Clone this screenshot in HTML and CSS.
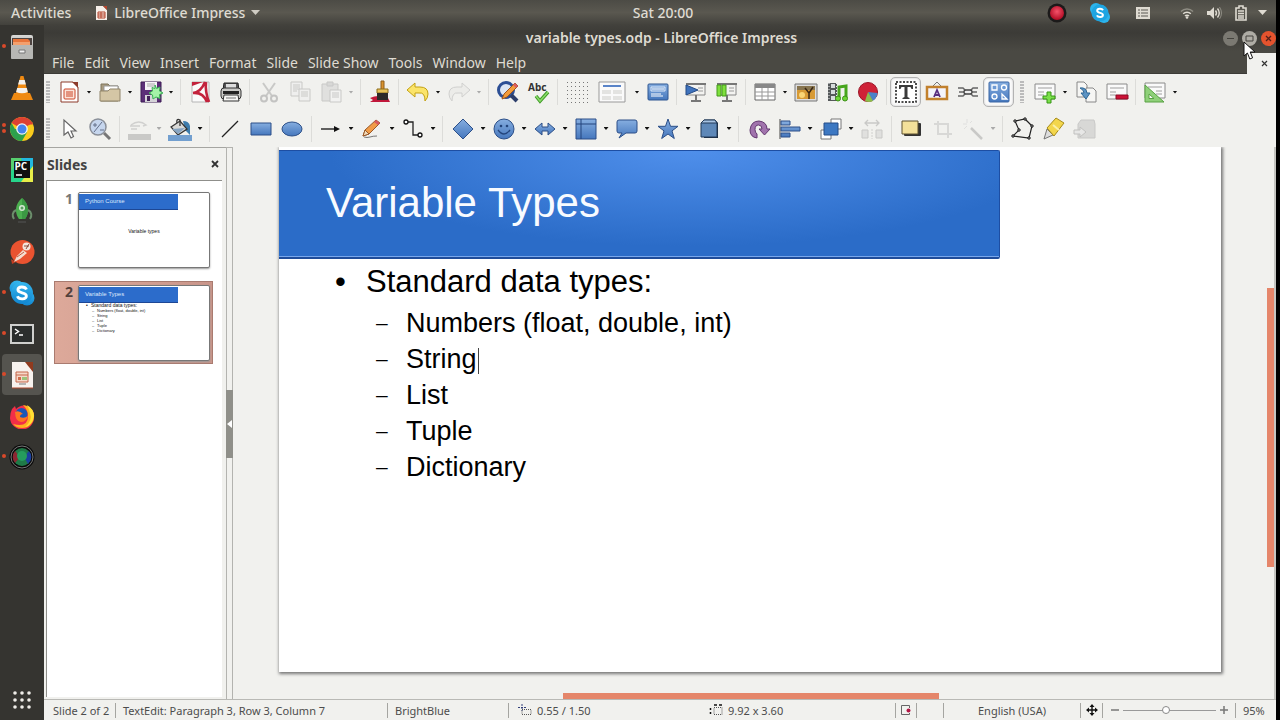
FILE: index.html
```
<!DOCTYPE html>
<html lang="en">
<head>
    <meta charset="UTF-8">
    <meta name="viewport" content="width=device-width, initial-scale=1.0">
    <title>variable types.odp - LibreOffice Impress</title>
    <link rel="stylesheet" href="styles.css">
</head>
<body>
    <svg class="defs" width="0" height="0" aria-hidden="true">
        <defs>
            <linearGradient id="blue" x1="0" y1="0" x2="0" y2="1"><stop offset="0" stop-color="#86aee0"/><stop offset="1" stop-color="#4577bd"/></linearGradient>
            <linearGradient id="metal" x1="0" y1="0" x2="0" y2="1"><stop offset="0" stop-color="#d8d8d6"/><stop offset="1" stop-color="#8e8e8c"/></linearGradient>
            <linearGradient id="sky" x1="0" y1="0" x2="0" y2="1"><stop offset="0" stop-color="#35b7ee"/><stop offset="1" stop-color="#1286d0"/></linearGradient>
            <radialGradient id="red" cx="0.5" cy="0.4" r="0.6"><stop offset="0" stop-color="#f4526a"/><stop offset="1" stop-color="#b00a22"/></radialGradient>
        </defs>
    </svg>
    <div class="screen">
        <header class="topbar">
            <div class="topLeft">
                <button class="topBtn">Activities</button>
                <button class="topBtn appMenu">
                    <svg width="13" height="14" viewBox="0 0 13 14"><path d="M1 0h7l4 4v10H1z" fill="#f6efe9"/><path d="M8 0h4v4z" fill="#b5452c"/><path d="M3 6h7v6H3zM3 8h7M6 6v6M3 10h7" fill="none" stroke="#b5452c"/></svg>
                    LibreOffice Impress
                    <svg width="9" height="5" viewBox="0 0 9 5"><path d="M0 0h9L4.500 5z" fill="#cfccc3"/></svg>
                </button>
            </div>
            <button class="topBtn clock">Sat 20:00</button>
            <div class="tray">
                <svg width="20" height="20" viewBox="0 0 20 20"><circle cx="10" cy="10" r="9.500" fill="#1c1a1a"/><circle cx="10" cy="10" r="7" fill="url(#red)"/></svg>
                <svg class="traySkype" width="20" height="20" viewBox="0 0 20 20"><circle cx="6" cy="6" r="6" fill="#2cb4ec"/><circle cx="14" cy="14" r="6" fill="#2cb4ec"/><circle cx="10" cy="10" r="8.500" fill="#1ea5e2"/><path d="M13 7.300C12 5.300 7.200 5.200 7.200 7.800s5.700 1.500 5.700 4.200-5 2.700-6 .3" fill="none" stroke="#fff" stroke-width="2"/></svg>
                <svg class="trayList" width="14" height="12" viewBox="0 0 14 12"><rect width="14" height="12" fill="#dfdbd2"/><path d="M2 3h2M5 3h7M2 6h2M5 6h7M2 9h2M5 9h7" stroke="#5b5952"/></svg>
                <svg class="trayWifi" width="14" height="12" viewBox="0 0 14 12"><path d="M1 4.500a8.500 8.500 0 0 1 12 0" fill="none" stroke="#8f8d84" stroke-width="1.500"/><path d="M3.200 6.800a5.400 5.400 0 0 1 7.600 0M5 9a2.800 2.800 0 0 1 4 0" fill="none" stroke="#dfdbd2" stroke-width="1.500"/><circle cx="7" cy="10.500" r="1.300" fill="#dfdbd2"/></svg>
                <svg class="traySound" width="16" height="14" viewBox="0 0 16 14"><path d="M1 5h3l4-4v12L4 9H1z" fill="#dfdbd2"/><path d="M9.500 4.500q2 2.500 0 5M11.500 2.500q3.500 4.500 0 9" fill="none" stroke="#dfdbd2" stroke-width="1.400"/><path d="M13.500 1q4 6 0 12" fill="none" stroke="#8f8d84"/></svg>
                <svg class="trayBattery" width="12" height="16" viewBox="0 0 12 16"><path d="M4 1h4v2h3v12H1V3h3z" fill="none" stroke="#dfdbd2" stroke-width="1.600"/><path d="M3 6h6M3 8.500h6M3 11h6M3 13h6" stroke="#dfdbd2" stroke-width="1.400"/></svg>
                <svg width="9" height="5" viewBox="0 0 9 5"><path d="M0 0h9L4.500 5z" fill="#dfdbd2"/></svg>
            </div>
        </header>

        <nav class="dock">
            <button class="dockItem running" aria-label="Files"><svg width="26" height="26" viewBox="0 0 26 26"><rect x="2" y="1" width="22" height="24" rx="2" fill="url(#metal)"/><rect x="3" y="4" width="20" height="7" fill="#4d4340"/><path d="M4 5h15l2 2v4H4z" fill="#e8743a"/><path d="M4 8h17v3H4z" fill="#f3a06e"/><rect x="2" y="11" width="22" height="14" rx="1" fill="#b7b7b4"/><path d="M10 16h6v3h-6z" fill="#eee" stroke="#777"/></svg></button>
            <button class="dockItem" aria-label="VLC"><svg width="26" height="26" viewBox="0 0 26 26"><path d="M5 18h16l3 7H2z" fill="#f08a12"/><path d="M11.500 1h3l5 19q-6.500 3-13 0z" fill="#f08a12"/><path d="M10.300 5h5.400l1.200 4.500H9.100zM8.200 13h9.600l1 4q-5.800 2.500-11.700 0z" fill="#f4f1ed"/></svg></button>
            <button class="dockItem running two" aria-label="Chrome"><svg width="26" height="26" viewBox="0 0 26 26"><circle cx="13" cy="13" r="12" fill="#f9cb1c"/><path d="M13 13L2.600 7A12 12 0 0 1 23.400 7z" fill="#dd4132"/><path d="M2.600 7A12 12 0 0 0 13 25l5.200-9L13 13H6z" fill="#2da04c"/><path d="M13 7.500h10.700" stroke="#dd4132" stroke-width="2"/><circle cx="13" cy="13" r="5.800" fill="#f4f6f5"/><circle cx="13" cy="13" r="4.500" fill="#4484ee"/></svg></button>
            <button class="dockItem" aria-label="PyCharm"><svg width="26" height="26" viewBox="0 0 26 26"><path d="M2 1h22v24H2z" fill="#27d58b"/><path d="M2 1h12L2 14z" fill="#57cf6f"/><path d="M12 1h12v8l-6 5z" fill="#22b8e0"/><path d="M24 9v16H12z" fill="#e8ee49"/><rect x="5" y="4" width="16" height="17" fill="#101010"/><text x="5.500" y="13" class="pcLogo">PC</text><path d="M7 18h6" stroke="#fff" stroke-width="1.500"/></svg></button>
            <button class="dockItem" aria-label="Rocket"><svg width="26" height="26" viewBox="0 0 26 26"><path d="M13 0c9 8 6 17 3 21h-6C7 17 4 8 13 0z" fill="#4caf50"/><path d="M13 0c9 8 6 17 3 21h-3z" fill="#3b9843"/><path d="M7 12c-4 2-4 6-2 9M19 12c4 2 4 6 2 9" fill="none" stroke="#6b8e6b" stroke-width="2"/><circle cx="13" cy="10" r="3" fill="#d5e8d4"/><circle cx="13" cy="10" r="1.500" fill="#5b9c61"/><path d="M9 24h8" stroke="#555"/></svg></button>
            <button class="dockItem" aria-label="Postman"><svg width="26" height="26" viewBox="0 0 26 26"><circle cx="13.500" cy="13" r="12" fill="#ea5330"/><path d="M2 20l5 3-4 2z" fill="#c33c20"/><circle cx="17.500" cy="7.500" r="4" fill="#f3e4dc"/><path d="M15 7h5M17 10l3-5" stroke="#8a4b3b"/><path d="M14 11l4 3-7 6-6 3 3-6z" fill="#f5ddd0"/><path d="M8 18l7-5" stroke="#c15d40"/></svg></button>
            <button class="dockItem running" aria-label="Skype"><svg width="26" height="26" viewBox="0 0 26 26"><circle cx="8" cy="8" r="7.500" fill="url(#sky)"/><circle cx="18" cy="18" r="7.500" fill="url(#sky)"/><circle cx="13" cy="13" r="11" fill="url(#sky)"/><path d="M17.500 9.500c-1.500-3.500-8.600-3.300-8.600.3 0 4 8.500 2 8.500 6.200 0 3.600-7.600 4-9 .2" fill="none" stroke="#fff" stroke-width="2.800"/></svg></button>
            <button class="dockItem running" aria-label="Terminal"><svg width="26" height="26" viewBox="0 0 26 26"><rect x="1" y="3" width="24" height="20" fill="#d0d0ce"/><rect x="3" y="5" width="20" height="16" fill="#2b2e2d"/><path d="M6 8l3.500 2.500L6 13M10 14h4" fill="none" stroke="#fff" stroke-width="1.500"/></svg></button>
            <button class="dockItem running active" aria-label="Impress"><svg width="26" height="28" viewBox="0 0 26 28"><path d="M3 1h14l7 8v18H3z" fill="#f7f2ee"/><path d="M16 1h8v10z" fill="#903a1e"/><path d="M3 27h21" stroke="#b1482c"/><path d="M7 11h12v10H7zM7 14h12" fill="#f6d8c8" stroke="#c5674a"/><path d="M9 16h3v3H9z" fill="#cf6c4c"/><path d="M13 16h5v3h-5z" fill="#9bc37b"/><path d="M10 23h7" stroke="#777"/></svg></button>
            <button class="dockItem" aria-label="Firefox"><svg width="26" height="26" viewBox="0 0 26 26"><path d="M3 6l3-3 1 3q5-5 11-3 8 4 7 11a12 12 0 0 1-24 1q0-5 2-9z" fill="#f22e48"/><path d="M14 2q9 1 11 10a12 12 0 0 1-12 13q-6 0-9-4 15 4 15-8 0-6-5-11z" fill="#ffb01f"/><path d="M18 2q7 4 7 11-1 9-9 11 8-7 5-14-1-4-3-8z" fill="#ffe034"/><circle cx="12.500" cy="11" r="6" fill="#1b57b8"/><path d="M6 9q4-2 8 2-3 0-3 3 4 2 8-1-2 6-7 6-6-1-6-10z" fill="#ff7520"/></svg></button>
            <button class="dockItem running" aria-label="Camera"><svg width="26" height="26" viewBox="0 0 26 26"><circle cx="13" cy="13" r="12.500" fill="#0a0a0a"/><circle cx="13" cy="13" r="11" fill="none" stroke="#777"/><circle cx="13" cy="13" r="9" fill="#1f7a48"/><path d="M6 7a9 9 0 0 0 0 12l5-6z" fill="#8c2732"/><path d="M20 7a9 9 0 0 1-1 13l-4-7z" fill="#1b3f9f"/><circle cx="13" cy="12" r="5" fill="#259c5d"/></svg></button>
            <button class="dockItem apps" aria-label="Show Applications"><svg width="18" height="18" viewBox="0 0 18 18" fill="#efede8"><circle cx="2" cy="2" r="1.800"/><circle cx="9" cy="2" r="1.800"/><circle cx="16" cy="2" r="1.800"/><circle cx="2" cy="9" r="1.800"/><circle cx="9" cy="9" r="1.800"/><circle cx="16" cy="9" r="1.800"/><circle cx="2" cy="16" r="1.800"/><circle cx="9" cy="16" r="1.800"/><circle cx="16" cy="16" r="1.800"/></svg></button>
        </nav>

        <main class="window">
            <div class="titlebar">
                <h1 class="windowTitle">variable types.odp - LibreOffice Impress</h1>
                <div class="windowBtns">
                    <button class="windowBtn minimize" aria-label="Minimize"><svg width="15" height="15" viewBox="0 0 15 15"><path d="M4 7.500h7" stroke="#44433e"/></svg></button>
                    <button class="windowBtn maximize" aria-label="Maximize"><svg width="15" height="15" viewBox="0 0 15 15"><path d="M4 5h7v5H4z" fill="none" stroke="#44433e"/></svg></button>
                    <button class="windowBtn close" aria-label="Close"><svg width="15" height="15" viewBox="0 0 15 15"><path d="M5 5l5 5M10 5l-5 5" stroke="#54211a" stroke-width="1.300"/></svg></button>
                    <svg class="pointer" width="13" height="19" viewBox="0 0 13 19"><path d="M1 1v14l3.400-3 2.400 6 2.800-1.200L7.200 11H12z" fill="#fff" stroke="#111"/></svg>
                </div>
            </div>
            <div class="menubar">
                <button class="menu">File</button>
                <button class="menu">Edit</button>
                <button class="menu">View</button>
                <button class="menu">Insert</button>
                <button class="menu">Format</button>
                <button class="menu">Slide</button>
                <button class="menu">Slide Show</button>
                <button class="menu">Tools</button>
                <button class="menu">Window</button>
                <button class="menu">Help</button>
                <button class="closeDoc" aria-label="Close Document"><svg width="7" height="7" viewBox="0 0 7 7"><path d="M1 1l5 5M6 1L1 6" stroke="#333" stroke-width="1.200"/></svg></button>
            </div>

            <div class="toolbar">
                <span class="grip"></span>
                <button class="tool" aria-label="New"><svg viewBox="0 0 24 24"><path d="M4 2h12l5 5v15H4z" fill="#fff" stroke="#8d3a2b"/><path d="M15 2h6v6z" fill="#8d3a2b"/><rect x="7" y="9" width="11" height="10" rx="1" fill="#fbe3d9" stroke="#cc4427"/><path d="M9 12h7M9 14h7M9 16h7" stroke="#cc4427"/></svg></button>
                <button class="arrow" aria-label="New options"></button>
                <button class="tool" aria-label="Open"><svg viewBox="0 0 24 24"><path d="M3 21V4h7l2 2h8v15z" fill="#a99c80" stroke="#7f745c"/><path d="M6 6h14v5H6z" fill="#fff" stroke="#999"/><path d="M2 11h8l2-2h10v12H2z" fill="#d4c6a5" stroke="#91856a"/></svg></button>
                <button class="arrow" aria-label="Open options"></button>
                <button class="tool" aria-label="Save"><svg viewBox="0 0 24 24"><path d="M2 2h20v20H2z" fill="#5c2f78" stroke="#3d1c54"/><path d="M6 2h12v8H6z" fill="#f5f4f6"/><path d="M8 4h8M8 6h8" stroke="#aaa"/><path d="M6 15h12v7H6z" fill="#d5d3d8"/><path d="M8 16h3v5H8z" fill="#43215a"/><path d="M16 5l1.500 3.500L21 7l-.5 4 3.500 2-3.500 1.500.5 4-4-1.500-3 2-.5-4L10 13l3.500-2L13 7.500l3 1z" fill="#a4f2a7" stroke="#39b154"/></svg></button>
                <button class="arrow" aria-label="Save options"></button>
                <span class="sep"></span>
                <button class="tool" aria-label="Export as PDF"><svg viewBox="0 0 24 24"><path d="M4 2h17v20H4z" fill="#fafafa" stroke="#b5b5b5"/><path d="M18 2q-1 10 3 20M17 2Q13 12 5 13q10-1 14 9" fill="none" stroke="#c3223c" stroke-width="2.600"/><path d="M4 2h11L4 6z" fill="#c3223c"/></svg></button>
                <button class="tool" aria-label="Print"><svg viewBox="0 0 24 24"><path d="M5 3h14l1 7H4z" fill="#555" stroke="#222"/><path d="M7 4h10v5H7z" fill="#ddd"/><rect x="2" y="8" width="20" height="11" rx="3" fill="#c9c9c6" stroke="#333"/><path d="M4 11h16v3H4z" fill="#222"/><path d="M5 15h14l1 6H4z" fill="#f6f6f4" stroke="#333"/><path d="M7 18h10" stroke="#777"/></svg></button>
                <span class="sep"></span>
                <button class="tool dim" aria-label="Cut"><svg viewBox="0 0 24 24"><path d="M6 3l9 13M18 3L9 16" fill="none" stroke="#9a9a9a" stroke-width="2"/><circle cx="7" cy="18.500" r="3" fill="none" stroke="#8d8d8d" stroke-width="2"/><circle cx="17" cy="18.500" r="3" fill="none" stroke="#8d8d8d" stroke-width="2"/></svg></button>
                <button class="tool dim" aria-label="Copy"><svg viewBox="0 0 24 24"><path d="M3 2h11v14H3z" fill="#eee" stroke="#999"/><path d="M5 5h7M5 7h7M5 9h7M5 11h4" stroke="#999"/><path d="M11 9h11v12H11z" fill="#eee" stroke="#999"/><path d="M13 12h7M13 14h7M13 16h7" stroke="#999"/></svg></button>
                <button class="tool dim" aria-label="Paste"><svg viewBox="0 0 24 24"><path d="M3 4h16v17H3z" fill="#ccc" stroke="#999"/><path d="M8 2h6v4H8z" fill="#bbb" stroke="#999"/><path d="M11 10h11v12H11z" fill="#f5f5f5" stroke="#999"/><path d="M13 13h7M13 15h7M13 17h7" stroke="#999"/></svg></button>
                <button class="arrow off" aria-label="Paste options"></button>
                <span class="sep"></span>
                <button class="tool" aria-label="Clone Formatting"><svg viewBox="0 0 24 24"><path d="M2 18q8-4 18 0l2 4H2l3-2z" fill="#c0173a"/><path d="M13 1h3v9h-3z" fill="#d9922e" stroke="#8d5c1b"/><path d="M9 9h11v4H9z" fill="#e8c35a" stroke="#8d6d1b"/><path d="M9 13h11v7H9z" fill="#2d2a29"/></svg></button>
                <span class="sep"></span>
                <button class="tool" aria-label="Undo"><svg viewBox="0 0 24 24"><path d="M1 10l8-7v4h5q8 0 8 7 0 4-3 7 0-9-6-8H9v4z" fill="#fbe46a" stroke="#c3a113"/></svg></button>
                <button class="arrow" aria-label="Undo options"></button>
                <button class="tool dim" aria-label="Redo"><svg viewBox="0 0 24 24"><path d="M23 10l-8-7v4h-5q-8 0-8 7 0 4 3 7 0-9 6-8h4v4z" fill="#e6e6e3" stroke="#aaa"/></svg></button>
                <button class="arrow off" aria-label="Redo options"></button>
                <span class="sep"></span>
                <button class="tool" aria-label="Find and Replace"><svg viewBox="0 0 24 24"><circle cx="10" cy="10" r="7.500" fill="#dce6f4" stroke="#2c4f95" stroke-width="3"/><path d="M15 15l6 6" stroke="#2c3e6b" stroke-width="4"/><path d="M6 19l2-5L19 3l3 3-11 11z" fill="#f29b3a" stroke="#9c551b"/><path d="M19 3l3 3-2 2-3-3z" fill="#d95c62"/></svg></button>
                <button class="tool" aria-label="Spelling"><svg viewBox="0 0 24 24"><text x="1" y="11" class="abc">Abc</text><path d="M9 16l4 5 8-9" fill="none" stroke="#3f9b26" stroke-width="3.500"/><path d="M9 16l4 5 8-9" fill="none" stroke="#8bdc6b" stroke-width="1.500"/></svg></button>
                <span class="sep"></span>
                <button class="tool" aria-label="Display Grid"><svg viewBox="0 0 24 24"><path d="M2 2.500h21M2 6.500h21M2 10.500h21M2 14.500h21M2 18.500h21M2 22.500h21" stroke="#777" stroke-dasharray="1 3"/></svg></button>
                <button class="tool wide" aria-label="Display Views"><svg viewBox="0 0 30 24"><path d="M2 2h26v20H2z" fill="#fafafa" stroke="#999"/><path d="M6 6h18" stroke="#5a84c8" stroke-width="2"/><path d="M5 10h9v4H5zM16 10h9v4h-9zM5 16h9v4H5zM16 16h9v4h-9z" fill="#e3e3e1"/></svg></button>
                <button class="arrow" aria-label="View options"></button>
                <button class="tool" aria-label="Master Slide"><svg viewBox="0 0 24 24"><rect x="2" y="4" width="20" height="16" rx="1" fill="url(#blue)" stroke="#2f5791"/><path d="M5 7h14v4H5z" fill="none" stroke="#dce8f8"/><path d="M6 9h12M5 14h10M5 16h12" stroke="#fff"/></svg></button>
                <span class="sep"></span>
                <button class="tool" aria-label="Start from First Slide"><svg viewBox="0 0 24 24"><path d="M3 4h18v11H3z" fill="#f3f3f1" stroke="#888"/><path d="M2 4h20" stroke="#777" stroke-width="2"/><path d="M12 15v5M7 21h10" stroke="#777" stroke-width="2"/><path d="M14 8h5M14 11h5" stroke="#999"/><path d="M2 5l12 5-12 5z" fill="#3f73bd" stroke="#254a85"/></svg></button>
                <button class="tool" aria-label="Start from Current Slide"><svg viewBox="0 0 24 24"><path d="M3 4h18v11H3z" fill="#f3f3f1" stroke="#888"/><path d="M2 4h20" stroke="#777" stroke-width="2"/><path d="M12 15v5M7 21h10" stroke="#777" stroke-width="2"/><path d="M14 8h5M14 11h5" stroke="#999"/><path d="M2 5h4v11H2zM7 5h4v11H7z" fill="#7ee03c" stroke="#45991c"/></svg></button>
                <span class="sep"></span>
                <button class="tool" aria-label="Table"><svg viewBox="0 0 24 24"><path d="M2 4h20v16H2z" fill="#fff" stroke="#666"/><path d="M2 4h20v4H2z" fill="#888"/><path d="M2 12h20M2 16h20M9 8v12M15 8v12" stroke="#999"/></svg></button>
                <button class="arrow" aria-label="Table options"></button>
                <button class="tool" aria-label="Image"><svg viewBox="0 0 24 24"><path d="M1 4h22v17H1z" fill="#ddd" stroke="#777"/><path d="M3 6h18v13H3z" fill="#d79a35"/><path d="M3 6h18v4H3z" fill="#88754e"/><circle cx="8" cy="15" r="3" fill="#f9d575"/><path d="M15 19v-6l-4-5M15 13l4-6" fill="none" stroke="#3a2713" stroke-width="1.500"/></svg></button>
                <button class="tool" aria-label="Audio or Video"><svg viewBox="0 0 24 24"><path d="M3 3h9v18H3z" fill="#55595a"/><path d="M6 4h4v4H6zM6 10h4v4H6zM6 16h4v4H6z" fill="#d7dcdc"/><path d="M4 3v18M11.500 3v18" stroke="#eee" stroke-dasharray="1 2"/><path d="M14 18V7l7-1v12" fill="none" stroke="#47a51c" stroke-width="3"/><circle cx="13" cy="18.500" r="2.500" fill="#6ed636" stroke="#3d8f18"/><circle cx="20" cy="18.500" r="2.500" fill="#6ed636" stroke="#3d8f18"/></svg></button>
                <button class="tool" aria-label="Chart"><svg viewBox="0 0 24 24"><circle cx="12" cy="12" r="9.500" fill="#cf2237" stroke="#9b1526"/><path d="M12 12l9.500 1q-1 6-5 8z" fill="#4b82c9"/><path d="M12 12l5 9q-4 2-8 0z" fill="#8cbd4b"/></svg></button>
                <span class="sep"></span>
                <button class="tool pressed" aria-label="Text Box"><svg viewBox="0 0 24 24"><path d="M2 2h20v20H2z" fill="#fff" stroke="#111" stroke-width="1.500" stroke-dasharray="2 1.500"/><path d="M5 5h14v4h-1.500l-1-2H13.500v10l2 1v1h-7v-1l2-1V7H7.500l-1 2H5z" fill="#3a3a3a"/></svg></button>
                <button class="tool" aria-label="Fontwork"><svg viewBox="0 0 24 24"><path d="M8 6l4-4 4 4" fill="none" stroke="#777"/><path d="M2 7h20v12H2z" fill="#f4f4fb" stroke="#c2812d" stroke-width="2.500"/><path d="M9 17l3-7 3 7M10 15h4" fill="none" stroke="#5a2e80" stroke-width="1.800"/></svg></button>
                <button class="tool" aria-label="Hyperlink"><svg viewBox="0 0 24 24"><path d="M2 8h5l3 3M22 8h-5l-3 3M2 16h5l3-3M22 16h-5l-3-3M3 12h5M16 12h5" fill="none" stroke="#666" stroke-width="1.500"/><rect x="8" y="10" width="8" height="4" rx="2" fill="#eee" stroke="#444" stroke-width="1.300"/></svg></button>
                <button class="tool pressed" aria-label="Show Draw Functions"><svg viewBox="0 0 24 24"><rect x="2" y="2" width="20" height="20" rx="1" fill="url(#blue)" stroke="#3b66a5"/><g fill="#6d9ad5" stroke="#fff" stroke-width="1.300"><path d="M5 5h5v5H5zM15 14v5h5z"/><circle cx="17" cy="7.500" r="2.500"/><circle cx="7.500" cy="16.500" r="2.500"/></g></svg></button>
                <span class="grip second"></span>
                <button class="tool" aria-label="New Slide"><svg viewBox="0 0 24 24"><path d="M2 4h20v15H2z" fill="#fafafa" stroke="#8a8a8a"/><path d="M5 8h14M5 12h6M5 15h6" stroke="#ccc" stroke-width="2"/><path d="M14 12h4v4h4v3h-4v4h-4v-4h-4v-3h4z" fill="#7be04a" stroke="#379415"/></svg></button>
                <button class="arrow" aria-label="New slide options"></button>
                <button class="tool" aria-label="Duplicate Slide"><svg viewBox="0 0 24 24"><path d="M3 2h7l3 3v12H3z" fill="#f6f6f4" stroke="#888"/><path d="M12 8h7l3 3v11H12z" fill="#f6f6f4" stroke="#888"/><path d="M6 8q6-1 7 5h3l-4 6-5-6h3q0-3-4-5z" fill="#5c94c4" stroke="#2e6796"/></svg></button>
                <button class="tool" aria-label="Delete Slide"><svg viewBox="0 0 24 24"><path d="M2 4h20v15H2z" fill="#fafafa" stroke="#8a8a8a"/><path d="M5 8h14M5 12h6M5 15h6" stroke="#ccc" stroke-width="2"/><path d="M11 15h12v4H11z" fill="#cc1237" stroke="#8e0b26"/></svg></button>
                <span class="sep"></span>
                <button class="tool" aria-label="Slide Layout"><svg viewBox="0 0 24 24"><path d="M2 3h20v15H2z" fill="#fafafa" stroke="#8a8a8a"/><path d="M5 7h14M13 11h6M13 14h6" stroke="#ccc" stroke-width="2"/><path d="M2 5l19 17H2z" fill="#8fd07a" stroke="#58a243"/><path d="M6 14l5 4.500H6z" fill="#fafafa" stroke="#58a243"/></svg></button>
                <button class="arrow" aria-label="Layout options"></button>
            </div>

            <div class="toolbar drawing">
                <span class="grip"></span>
                <button class="tool" aria-label="Select"><svg viewBox="0 0 24 24"><path d="M7 3v15l4-3 3 6 2.500-1.500L14 14h5z" fill="#fff" stroke="#666" stroke-width="1.200"/></svg></button>
                <button class="tool" aria-label="Zoom and Pan"><svg viewBox="0 0 24 24"><path d="M16 16l6 6" stroke="#777" stroke-width="3"/><circle cx="10" cy="10" r="8" fill="#c6d6ee" stroke="#8a8f98" stroke-width="1.500"/><path d="M5 8h4M7 6v4M12 13h4M6 15l8-10" stroke="#64708a"/></svg></button>
                <span class="sep"></span>
                <button class="tool dim" aria-label="Line Color"><svg viewBox="0 0 24 24"><path d="M4 8q8-6 15 0l-3 1M3 9h10M4 12h6" fill="none" stroke="#aaa" stroke-width="1.500"/><path d="M1 17h23v6H1z" fill="#999"/></svg></button>
                <button class="arrow off" aria-label="Line color options"></button>
                <button class="tool" aria-label="Fill Color"><svg viewBox="0 0 24 24"><path d="M15 4q6 0 7 5v9l-5-5z" fill="#3d7cac"/><path d="M3 10l9-6 7 8-9 6z" fill="#d9d9d6" stroke="#333" stroke-width="1.300"/><path d="M4 12l13-1-7 6z" fill="#87a5c2"/><path d="M12 9V3q-4-2-3 3" fill="none" stroke="#333" stroke-width="1.300"/><path d="M0 18h24v6H0z" fill="#729fcf"/></svg></button>
                <button class="arrow" aria-label="Fill color options"></button>
                <span class="sep"></span>
                <button class="tool" aria-label="Line"><svg viewBox="0 0 24 24"><path d="M4 20L20 4" stroke="#222" stroke-width="1.300"/></svg></button>
                <button class="tool" aria-label="Rectangle"><svg viewBox="0 0 24 24"><path d="M2 6h20v12H2z" fill="url(#blue)" stroke="#2c4f88"/></svg></button>
                <button class="tool" aria-label="Ellipse"><svg viewBox="0 0 24 24"><ellipse cx="12" cy="12" rx="10" ry="7" fill="url(#blue)" stroke="#2c4f88"/></svg></button>
                <span class="sep"></span>
                <button class="tool" aria-label="Lines and Arrows"><svg viewBox="0 0 24 24"><path d="M2 12h15" stroke="#111" stroke-width="1.300"/><path d="M15 9l6 3-6 3z" fill="#111"/></svg></button>
                <button class="arrow" aria-label="Arrow options"></button>
                <button class="tool" aria-label="Curve"><svg viewBox="0 0 24 24"><path d="M4 20q3 1 6 0t7-1" fill="none" stroke="#777"/><path d="M3 19l2-6L16 3l4 3L9 17z" fill="#f19c47" stroke="#99592a"/><path d="M16 3l4 3-2 2-4-3z" fill="#d65a60"/><path d="M3 19l2-6 4 4z" fill="#f3dcb9" stroke="#99592a"/></svg></button>
                <button class="arrow" aria-label="Curve options"></button>
                <button class="tool" aria-label="Connector"><svg viewBox="0 0 24 24"><path d="M7 5h5v13h5" fill="none" stroke="#222" stroke-width="1.300"/><circle cx="5" cy="5" r="2" fill="#fff" stroke="#111" stroke-width="1.300"/><circle cx="19" cy="18" r="2" fill="#fff" stroke="#111" stroke-width="1.300"/></svg></button>
                <button class="arrow" aria-label="Connector options"></button>
                <span class="sep"></span>
                <button class="tool" aria-label="Basic Shapes"><svg viewBox="0 0 24 24"><path d="M12 2l10 10-10 10L2 12z" fill="url(#blue)" stroke="#2c4f88"/></svg></button>
                <button class="arrow" aria-label="Shape options"></button>
                <button class="tool" aria-label="Symbol Shapes"><svg viewBox="0 0 24 24"><circle cx="12" cy="12" r="10" fill="url(#blue)" stroke="#2c4f88"/><circle cx="9" cy="9" r="1.300" fill="#24457c"/><circle cx="15" cy="9" r="1.300" fill="#24457c"/><path d="M6 13q6 8 12 0" fill="none" stroke="#24457c" stroke-width="1.300"/></svg></button>
                <button class="arrow" aria-label="Symbol options"></button>
                <button class="tool" aria-label="Block Arrows"><svg viewBox="0 0 24 24"><path d="M2 12l7-6v4h6V6l7 6-7 6v-4H9v4z" fill="url(#blue)" stroke="#2c4f88"/></svg></button>
                <button class="arrow" aria-label="Block arrow options"></button>
                <button class="tool" aria-label="Flowchart"><svg viewBox="0 0 24 24"><path d="M2 2h20v20H2z" fill="url(#blue)" stroke="#2c4f88"/><path d="M7 2v20M2 7h20" stroke="#24457c"/></svg></button>
                <button class="arrow" aria-label="Flowchart options"></button>
                <button class="tool" aria-label="Callouts"><svg viewBox="0 0 24 24"><path d="M4 3h16q2 0 2 2v9q0 2-2 2h-9l-7 5 3-5H4q-2 0-2-2V5q0-2 2-2z" fill="url(#blue)" stroke="#2c4f88"/></svg></button>
                <button class="arrow" aria-label="Callout options"></button>
                <button class="tool" aria-label="Stars and Banners"><svg viewBox="0 0 24 24"><path d="M12 2l2.500 7.300H22l-6 4.600 2.300 7.600L12 17l-6.300 4.500L8 13.900 2 9.300h7.500z" fill="url(#blue)" stroke="#2c4f88"/></svg></button>
                <button class="arrow" aria-label="Star options"></button>
                <button class="tool" aria-label="3D Objects"><svg viewBox="0 0 24 24"><path d="M7 3h11l3 3v15H7z" fill="#1d2b3c"/><path d="M4 6l3-3h11l2 3v14H4z" fill="#5e88b8" stroke="#233a58"/><path d="M4 6l3-3h11l2 3z" fill="#a5c2e2" stroke="#233a58"/></svg></button>
                <button class="arrow" aria-label="3D options"></button>
                <span class="sep"></span>
                <button class="tool" aria-label="Rotate"><svg viewBox="0 0 24 24"><path d="M10 21q-7-1-7-8 1-9 9-9 8 1 8 8h3l-5.500 6L12 12h3q0-4-3.500-4T8 12.500q0 3 2 4.500z" fill="#a173ad" stroke="#633870"/></svg></button>
                <button class="tool" aria-label="Align"><svg viewBox="0 0 24 24"><path d="M2 2v20" stroke="#444"/><path d="M3 4h9v4H3zM3 10h19v4H3zM3 16h9v4H3z" fill="url(#blue)" stroke="#2c4f88"/></svg></button>
                <button class="arrow" aria-label="Align options"></button>
                <button class="tool" aria-label="Arrange"><svg viewBox="0 0 24 24"><path d="M12 2h10v10H12zM2 13h10v9H2z" fill="#fff" stroke="#777"/><path d="M5 6h14v12H5z" fill="#3d78c2" stroke="#254c88"/></svg></button>
                <button class="arrow" aria-label="Arrange options"></button>
                <button class="tool dim" aria-label="Distribute"><svg viewBox="0 0 24 24"><path d="M5 6h14M8 3L5 6l3 3M16 3l3 3-3 3" fill="none" stroke="#999" stroke-width="1.300"/><path d="M2 13h6v8H2zM16 13h6v8h-6z" fill="#ccc" stroke="#999"/><path d="M12 12v10" stroke="#aaa" stroke-dasharray="2 1"/></svg></button>
                <span class="sep"></span>
                <button class="tool" aria-label="Shadow"><svg viewBox="0 0 24 24"><rect x="5" y="6" width="17" height="13" rx="1" fill="#333"/><path d="M3 4h16v13H3z" fill="#f3e09a" stroke="#5c5130"/></svg></button>
                <button class="tool dim" aria-label="Crop"><svg viewBox="0 0 24 24"><path d="M4 7h14v14M8 4v13h14" fill="none" stroke="#bbb" stroke-width="2"/></svg></button>
                <button class="tool dim" aria-label="Filter"><svg viewBox="0 0 24 24"><path d="M10 11l11 11" stroke="#999" stroke-width="2.500"/><path d="M6 2v4M2 7h4M11 4l-2 2M3 12l3-3" stroke="#ccc"/></svg></button>
                <button class="arrow off" aria-label="Filter options"></button>
                <span class="sep"></span>
                <button class="tool" aria-label="Points"><svg viewBox="0 0 24 24"><path d="M4 4l10-2 7 7-3 12-16-2 6-6z" fill="none" stroke="#222" stroke-width="1.200"/><path d="M3 3h2v2H3zM13 1h2v2h-2zM20 8h2v2h-2zM17 20h2v2h-2zM1 18h2v2H1zM7 12h2v2H7z" fill="#fff" stroke="#111"/></svg></button>
                <button class="tool" aria-label="Gluepoints"><svg viewBox="0 0 24 24"><path d="M2 22l3-10 6 6z" fill="#ddd" stroke="#777"/><path d="M5 11L14 1l8 5-10 13z" fill="#f3d64c" stroke="#a78c1b"/><path d="M11 8l6 5" stroke="#fbf0a5" stroke-width="2"/></svg></button>
                <button class="tool dim" aria-label="Toggle Extrusion"><svg viewBox="0 0 24 24"><path d="M5 7l3-4h13l1 4v14H5z" fill="#bbb" stroke="#999"/><path d="M1 13h6v-3l6 5-6 5v-3H1z" fill="#ddd" stroke="#888"/></svg></button>
            </div>

            <div class="workspace">
                <aside class="slidePanel">
                    <div class="panelHead">
                        <h2>Slides</h2>
                        <button class="closePanel" aria-label="Close Slides panel"><svg width="8" height="8" viewBox="0 0 8 8"><path d="M1 1l6 6M7 1L1 7" stroke="#333" stroke-width="1.800"/></svg></button>
                    </div>
                    <ol class="slideList">
                        <li class="slideItem">
                            <span class="slideNum">1</span>
                            <div class="thumb">
                                <div class="thumbTitle">Python Course</div>
                                <p class="thumbCenter">Variable types</p>
                            </div>
                        </li>
                        <li class="slideItem selected">
                            <span class="slideNum">2</span>
                            <div class="thumb">
                                <div class="thumbTitle">Variable Types</div>
                                <ul class="thumbBody">
                                    <li class="thumbMain">Standard data types:</li>
                                    <li>Numbers (float, double, int)</li>
                                    <li>String</li>
                                    <li>List</li>
                                    <li>Tuple</li>
                                    <li>Dictionary</li>
                                </ul>
                            </div>
                        </li>
                    </ol>
                </aside>
                <div class="splitter">
                    <button class="collapse" aria-label="Hide panel"><svg width="5" height="8" viewBox="0 0 5 8"><path d="M5 0v8L0 4z" fill="#fff"/></svg></button>
                </div>
                <section class="editor">
                    <div class="canvas">
                        <article class="slide">
                            <h2 class="slideTitle">Variable Types</h2>
                            <ul class="outline">
                                <li class="level1">Standard data types:
                                    <ul>
                                        <li class="level2">Numbers (float, double, int)</li>
                                        <li class="level2">String<span class="caret"></span></li>
                                        <li class="level2">List</li>
                                        <li class="level2">Tuple</li>
                                        <li class="level2">Dictionary</li>
                                    </ul>
                                </li>
                            </ul>
                        </article>
                    </div>
                    <div class="scrollV"><span class="scrollThumb"></span></div>
                    <div class="scrollH"><span class="scrollThumb"></span></div>
                </section>
            </div>

            <footer class="statusbar">
                <span class="cell first">Slide 2 of 2</span>
                <span class="cell">TextEdit: Paragraph 3, Row 3, Column 7</span>
                <span class="cell">BrightBlue</span>
                <span class="cell position">
                    <span class="measure"><svg width="14" height="12" viewBox="0 0 14 12"><path d="M4 0v7M0 3.500h8" stroke="#33407a" stroke-dasharray="2 1"/><path d="M4 5.500h9v5H4z" fill="none" stroke="#555" stroke-dasharray="1 1"/></svg>0.55 / 1.50</span>
                    <span class="measure"><svg width="14" height="12" viewBox="0 0 14 12"><path d="M5 3.500h8v7H5z" fill="none" stroke="#555" stroke-dasharray="1 1"/><path d="M1.500 4v2M1.500 8v2" stroke="#111" stroke-width="1.500"/><path d="M5 1h3M10 1h3" stroke="#111" stroke-width="1.500"/></svg>9.92 x 3.60</span>
                </span>
                <span class="cell icon"><svg width="10" height="10" viewBox="0 0 10 10"><path d="M8.500 3V.5h-8v9h8V8" fill="none" stroke="#666"/><circle cx="7.500" cy="5.500" r="2" fill="#b31645"/></svg></span>
                <span class="cell"></span>
                <span class="cell language">English (USA)</span>
                <span class="cell icon"><svg width="12" height="12" viewBox="0 0 12 12"><path d="M6 1v10M1 6h10" stroke="#111" stroke-width="1.400"/><path d="M6 0l2.500 3h-5zM6 12L3.500 9h5zM0 6l3-2.500v5zM12 6L9 8.500v-5z" fill="#111"/></svg></span>
                <span class="cell zoom">
                    <button class="zoomBtn" aria-label="Zoom out"><svg width="8" height="8" viewBox="0 0 8 8"><path d="M0 4h8" stroke="#777" stroke-width="1.500"/></svg></button>
                    <input class="zoomSlider" type="range" min="0" max="100" value="46" aria-label="Zoom">
                    <button class="zoomBtn" aria-label="Zoom in"><svg width="8" height="8" viewBox="0 0 8 8"><path d="M0 4h8M4 0v8" stroke="#777" stroke-width="1.500"/></svg></button>
                </span>
                <span class="cell">95%</span>
            </footer>
        </main>
    </div>
</body>
</html>
```

FILE: styles.css
```
* {
    box-sizing: border-box;
    margin: 0;
    padding: 0;
}
body {
    background-color: #000;
    color: #4c4c4c;
    font-family: 'Noto Sans', 'Open Sans', sans-serif;
    font-size: 14px;
    overflow: hidden;
}
button {
    background: none;
    border: none;
    color: inherit;
    font: inherit;
}
ul, ol {
    list-style: none;
}
.defs {
    position: absolute;
}
.screen {
    display: grid;
    grid-template-columns: 44px minmax(0, 1fr);
    grid-template-rows: 25px minmax(0, 1fr);
    height: 100vh;
    padding-right: 4px;
}

/* top panel */
.topbar {
    grid-column: 1 / 3;
    display: grid;
    grid-template-columns: 1fr auto 1fr;
    align-items: center;
    background: linear-gradient(#4c4b45, #5a5850 50%, #42413c);
    color: #dfdbd2;
    line-height: 18px;
    padding: 0 9px 0 11px;
}
.topLeft {
    display: flex;
    gap: 24px;
}
.topBtn {
    font-weight: 500;
    white-space: nowrap;
}
.appMenu {
    display: flex;
    align-items: center;
    gap: 6px;
}
.clock {
    margin-left: 48px;
}
.tray {
    display: flex;
    align-items: center;
    justify-content: flex-end;
}
.traySkype {
    margin-left: 23px;
}
.trayList {
    margin: 0 30px 0 26px;
}
.traySound {
    margin: 0 13px 0 12px;
}
.trayBattery {
    margin-right: 11px;
}

/* dock */
.dock {
    display: flex;
    flex-direction: column;
    align-items: center;
    background-color: #353430;
    padding-top: 1px;
}
.dockItem {
    position: relative;
    display: flex;
    align-items: center;
    justify-content: center;
    flex: none;
    width: 40px;
    height: 41px;
    border-radius: 4px;
}
.dockItem.active {
    background-color: #55544f;
}
.running::before {
    content: '';
    position: absolute;
    left: 0;
    top: 18px;
    width: 4px;
    height: 4px;
    border-radius: 50%;
    background-color: #d9492a;
}
.running.two::before {
    top: 15px;
    box-shadow: 0 6px #d9492a;
}
.apps {
    margin-top: auto;
}
.pcLogo {
    font: bold 10px 'Open Sans', sans-serif;
    fill: #fff;
}

/* window */
.window {
    display: grid;
    grid-template-rows: 26px 23px 36px 37px minmax(0, 1fr) 20px;
    background-color: #f1f1ee;
}
.titlebar {
    display: flex;
    align-items: center;
    background: linear-gradient(#42413c, #3c3b37 30%, #4a4943);
    color: #dfdbd2;
}
.windowTitle {
    flex: 1;
    font-size: 14px;
    font-weight: 600;
    line-height: 20px;
    padding-left: 56px;
    text-align: center;
}
.windowBtns {
    position: relative;
    display: flex;
    gap: 4px;
}
.windowBtn {
    width: 15px;
    height: 15px;
    border-radius: 50%;
}
.windowBtn svg {
    display: block;
}
.minimize {
    background-color: #7b7972;
}
.maximize {
    background-color: #aeaca5;
}
.close {
    background-color: #e4532e;
}
.pointer {
    position: absolute;
    left: 20px;
    top: 10px;
    z-index: 1;
}
.menubar {
    display: flex;
    align-items: center;
    gap: 10px;
    background-color: #4a4943;
    border-bottom: 1px solid #3c3b37;
    color: #dfdbd2;
    padding: 2px 0 0 8px;
}
.menu {
    line-height: 20px;
    white-space: nowrap;
}
.closeDoc {
    display: flex;
    align-items: center;
    justify-content: center;
    align-self: stretch;
    width: 29px;
    margin: 0 0 -1px auto;
    padding-left: 5px;
    background-color: #f1f1ee;
}

/* toolbars */
.toolbar {
    display: flex;
    align-items: center;
    padding-left: 2px;
}
.grip {
    width: 4px;
    height: 22px;
    margin-right: 3px;
    background: repeating-linear-gradient(#bbb 0 2px, #f1f1ee 2px 3px);
}
.grip.second {
    margin: 0 5px 0 6px;
}
.tool {
    display: flex;
    align-items: center;
    justify-content: center;
    flex: none;
    width: 31px;
    height: 30px;
}
.tool svg {
    flex: none;
    width: 24px;
    height: 24px;
}
.tool.wide {
    width: 40px;
}
.tool.wide svg {
    width: 30px;
}
.tool.dim svg {
    opacity: 0.45;
}
.tool.pressed {
    border: 1px solid #b3b3b3;
    border-radius: 5px;
    background-color: #fafafa;
    box-shadow: inset 0 0 2px #bbb;
}
.abc {
    font: bold 10px 'Noto Sans', sans-serif;
    fill: #333;
}
.arrow {
    flex: none;
    width: 10px;
    height: 30px;
}
.arrow::before {
    content: '';
    display: block;
    margin: 0 auto;
    width: 5px;
    height: 3px;
    background-color: #111;
    clip-path: polygon(0 0, 100% 0, 50% 100%);
}
.arrow.off::before {
    background-color: #aaa;
}
.sep {
    flex: none;
    width: 7px;
    height: 26px;
    background: linear-gradient(#dcdcd9, #dcdcd9) center / 1px 100% no-repeat;
}
.arrow + .sep {
    width: 8px;
}
.drawing .sep {
    width: 8px;
}
.drawing .arrow + .sep {
    width: 9px;
}

/* slide panel */
.workspace {
    display: grid;
    grid-template-columns: 182px 7px minmax(0, 1fr);
    border-bottom: 1px solid #b9b9b5;
}
.slidePanel {
    display: flex;
    flex-direction: column;
    border-top: 1px solid #a5a5a1;
    padding: 0 4px 2px 2px;
}
.panelHead {
    display: flex;
    align-items: center;
    justify-content: space-between;
    height: 32px;
    padding: 0 3px 0 1px;
}
.panelHead h2 {
    color: #444;
    font-size: 14px;
    font-weight: 700;
}
.closePanel {
    display: flex;
}
.slideList {
    flex: 1;
    background-color: #fff;
    border-top: 1px solid #8f8f8b;
    border-left: 1px solid #8f8f8b;
    padding: 7px 9px 0 7px;
}
.slideItem {
    display: flex;
    gap: 4px;
    height: 83px;
    padding: 3px 2px 0 10px;
    margin-bottom: 10px;
    border: 1px solid transparent;
}
.slideItem.selected {
    background: linear-gradient(90deg, #dda99a, #c9958a);
    border-color: #a97b70;
}
.slideNum {
    width: 9px;
    font-size: 14px;
    font-weight: 700;
    line-height: 14px;
    color: #777;
}
.selected .slideNum {
    color: #54413c;
}
.thumb {
    flex: 1;
    height: 76px;
    background-color: #fff;
    border: 1px solid #777;
    border-radius: 2px;
    color: #111;
    font-family: 'Liberation Sans', sans-serif;
    font-size: 4px;
    box-shadow: 0 1px 2px #999;
}
.thumbTitle {
    width: 76%;
    height: 16px;
    margin-top: 1px;
    padding-left: 6px;
    background-color: #2c6ccb;
    border-bottom: 1px solid #1d4795;
    color: #dce8fb;
    font-size: 6px;
    line-height: 15px;
}
.thumbCenter {
    margin-top: 18px;
    font-size: 5px;
    text-align: center;
}
.thumbBody li {
    padding-left: 18px;
    line-height: 5px;
}
.thumbBody li::before {
    content: '–';
    float: left;
    margin-left: -5px;
}
.thumbBody .thumbMain {
    padding-left: 12px;
    font-size: 5px;
}
.thumbBody .thumbMain::before {
    content: '•';
}
.splitter {
    display: flex;
    align-items: center;
    border: 1px solid #b3b3af;
    border-width: 1px 1px 0;
}
.collapse {
    display: flex;
    align-items: center;
    justify-content: center;
    flex: none;
    width: 7px;
    height: 68px;
    margin-left: -1px;
    background-color: #8f8f89;
}

/* editing area */
.editor {
    display: grid;
    grid-template-columns: minmax(0, 1fr) 7px;
    grid-template-rows: minmax(0, 1fr) 6px;
    border-right: 2px solid #c4c4c0;
}
.canvas {
    overflow: hidden;
    padding: 0 46px 21px 46px;
}
.slide {
    height: 100%;
    background-color: #fff;
    color: #000;
    font-family: 'Liberation Sans', Arial, sans-serif;
    padding-top: 3px;
    box-shadow: 1px 1px 3px 1px #777;
}
.slideTitle {
    width: calc(100% * 721 / 942);
    height: 109px;
    padding-left: 47px;
    background: radial-gradient(ellipse 50% 90% at 57% 0, #4f8feb, #2b6cc8);
    border-top: 1px solid #1d4ea3;
    border-bottom: 2px solid #1f4c9a;
    border-right: 1px solid #1d4ea3;
    border-radius: 0 2px 2px 0;
    box-shadow: inset 0 -1px #78a7ec;
    color: #f8fbff;
    font-size: 42px;
    font-weight: 400;
    line-height: 104px;
}
.outline li::before {
    float: left;
}
.level1 {
    padding-left: 87px;
    font-size: 31px;
    line-height: 46px;
}
.level1::before {
    content: '•';
    margin-left: -31px;
}
.level2 {
    padding-left: 40px;
    font-size: 27px;
    line-height: 36px;
}
.level2::before {
    content: '–';
    margin-left: -30px;
    font-size: 21px;
}
.caret {
    display: inline-block;
    width: 1px;
    height: 26px;
    margin-left: 1px;
    background-color: #444;
    vertical-align: -6px;
}
.scrollV {
    display: grid;
    grid-template-rows: 141fr 280fr 126fr;
}
.scrollV .scrollThumb {
    grid-row: 2;
}
.scrollH {
    display: grid;
    grid-template-columns: 330fr 376fr 328fr;
}
.scrollH .scrollThumb {
    grid-column: 2;
}
.scrollThumb {
    background-color: #e5866a;
}

/* status bar */
.statusbar {
    display: grid;
    grid-template-columns: 71px 272fr 121fr 387fr 21px 27px 137fr 22px 133px 41px;
    align-items: center;
    font-size: 11px;
    white-space: nowrap;
}
.cell {
    display: flex;
    align-items: center;
    height: 15px;
    padding-left: 7px;
    border-left: 1px solid #a5a5a1;
}
.cell.first {
    border-left: none;
    padding-left: 9px;
}
.position {
    display: grid;
    grid-template-columns: 190fr 187fr;
}
.measure {
    display: flex;
    align-items: center;
    gap: 5px;
    line-height: 15px;
    padding-left: 2px;
}
.cell.icon {
    justify-content: center;
    padding: 0;
}
.cell.language {
    justify-content: center;
    padding: 0;
}
.cell.zoom {
    gap: 4px;
    padding-left: 8px;
}
.zoomBtn {
    display: flex;
}
.zoomSlider {
    appearance: none;
    width: 93px;
    height: 12px;
    background: linear-gradient(#999, #999) center / 100% 1px no-repeat;
}
.zoomSlider::-webkit-slider-thumb {
    appearance: none;
    width: 8px;
    height: 8px;
    border: 1px solid #888;
    border-radius: 50%;
    background-color: #fff;
}
```
